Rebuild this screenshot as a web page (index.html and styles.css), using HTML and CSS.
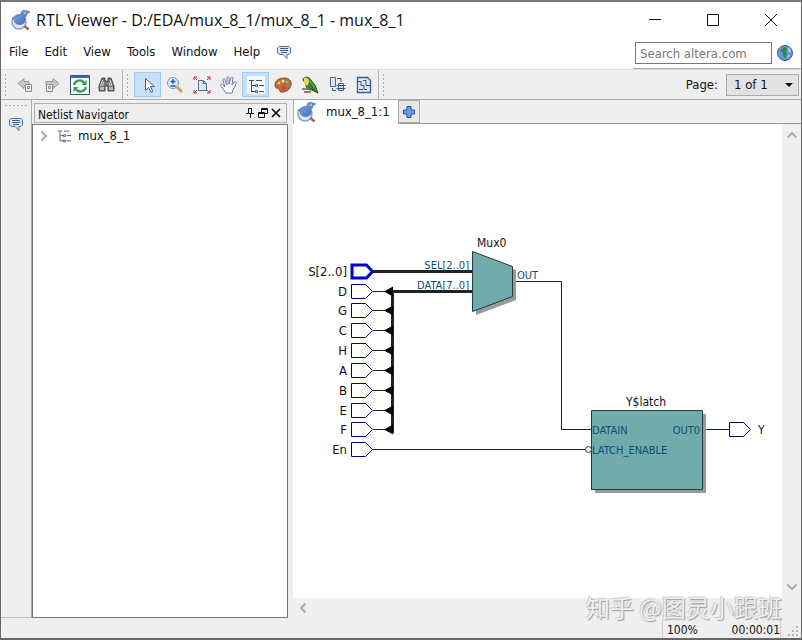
FILE: index.html
```html
<!DOCTYPE html>
<html lang="en">
<head>
<meta charset="utf-8">
<title>RTL Viewer</title>
<link rel="stylesheet" href="styles.css">
</head>
<body>
<svg class="defs" aria-hidden="true">
  <defs>
    <linearGradient id="blue" x1="0" y1="0" x2="1" y2="1"><stop offset="0" stop-color="#8db4ea"/><stop offset="1" stop-color="#3c62b0"/></linearGradient>
    <symbol id="app" viewBox="0 0 22 22">
      <circle cx="9" cy="13" r="7" fill="#dce9f8" stroke="#8fa3c0" stroke-width="1.6"/>
      <path d="M14.500 17l4 3.500" stroke="#a0703a" stroke-width="2.6"/>
      <path d="M2 9l4-1c0-2 3-3 5-2-1-4 3-6 6-4l3 1-3 1.500c0 2-1 3-2 4 1 5-2 7-5 7-4 0-6-2-6-5z" fill="url(#blue)" stroke="#4668ac" stroke-width=".6"/>
      <circle cx="15" cy="4" r=".8" fill="#fff"/>
    </symbol>
    <symbol id="note" viewBox="0 0 16 16">
      <path d="M3 2.500h10l1.500 1.500v5L13 10.500h-2v4l-4-4H4L1.500 9V4z" fill="#dce8fa" stroke="#52719f"/>
      <path d="M4 4.500h8M4 6.500h8M5 8.500h6" stroke="#3f5d96"/>
    </symbol>
    <symbol id="tree" viewBox="0 0 18 18">
      <path d="M2 3.500h5M4.500 4v11M5 8.500h4M5 14.500h4" fill="none" stroke="#445066"/>
      <path d="M9 3.500h6M12 8.500h5M12 14.500h5" stroke="#445066"/>
      <path d="M8.500 7.500h2v2h-2zM8.500 13.500h2v2h-2z" fill="#d4e4fa" stroke="#4a6285"/>
    </symbol>
    <symbol id="port" viewBox="0 0 24 16" overflow="visible"><path d="M.5.500h14l7 7-7 7h-14z" fill="#fff" stroke="#00007c"/></symbol>
  </defs>
</svg>

<div class="window">
  <header class="titlebar">
    <svg class="app-icon"><use href="#app"/></svg>
    <h1>RTL Viewer - D:/EDA/mux_8_1/mux_8_1 - mux_8_1</h1>
    <div class="caption">
      <button aria-label="Minimize"><svg viewBox="0 0 14 14"><path d="M1 6.500h12"/></svg></button>
      <button aria-label="Maximize"><svg viewBox="0 0 14 14"><path d="M1.500 1.500h11v11h-11z"/></svg></button>
      <button aria-label="Close"><svg viewBox="0 0 14 14"><path d="M1 1l12 12M13 1L1 13"/></svg></button>
    </div>
  </header>

  <div class="menubar">
    <nav>
      <button>File</button><button>Edit</button><button>View</button><button>Tools</button><button>Window</button><button>Help</button>
      <button aria-label="Feedback"><svg class="i16"><use href="#note"/></svg></button>
    </nav>
    <form class="search">
      <input type="text" placeholder="Search altera.com" aria-label="Search altera.com">
      <button type="button" aria-label="Go"><svg class="i16" viewBox="0 0 16 16"><circle cx="8" cy="8" r="7.500" fill="#6c95d4" stroke="#3c5c94"/><path d="M3 6l4-4 3 1-1 3 1 3-2 5-2-3 0-3z" fill="#2b8a4c"/><path d="M11 2l3 3-1 3-2-2zM11 10l2 0-2 3z" fill="#a9cdea"/></svg></button>
    </form>
  </div>

  <div class="toolbar">
    <div class="group">
      <i class="grip"></i>
      <button aria-label="Back"><svg viewBox="0 0 20 20"><path d="M2 8.500l6-5v3h5v4H8v3z" fill="#c9c9c9" stroke="#999"/><path d="M9.500 9.500h6v7h-6zM11.500 11.500h2v2h-2z" fill="#eee" stroke="#8c8c8c"/></svg></button>
      <button aria-label="Forward"><svg viewBox="0 0 20 20"><path d="M16 8.500l-6-5v3H3v4h7v3z" fill="#c9c9c9" stroke="#999"/><path d="M3.500 9.500h6v7h-6zM5.500 11.500h2v2h-2z" fill="#eee" stroke="#8c8c8c"/></svg></button>
      <button aria-label="Refresh"><svg viewBox="0 0 20 20"><path d="M.5.500h19v19H.5z" fill="#f5faf5" stroke="#335082"/><path d="M1 1h18v2H1z" fill="#416cb4"/><path d="M4 10c1-5 8-6 10-2M16 12c-1 5-8 6-10 2" fill="none" stroke="#3ca05a" stroke-width="2.400"/><path d="M16.500 5v5h-5zM3.500 17v-5h5z" fill="#3ca05a"/></svg></button>
      <button aria-label="Find"><svg viewBox="0 0 20 20"><path d="M5 3h3v3h3V3h3l3 8v5h-6v-5H8v5H2v-5z" fill="#777" stroke="#333" stroke-width=".8"/><path d="M5.500 5l-2 6M13 5l2 6M6.500 7l-1 4M12 8l1 3" stroke="#ddd"/><path d="M3 12h4v3H3zM12 12h4v3h-4z" fill="#bbb"/></svg></button>
    </div>
    <div class="group tools">
      <i class="grip"></i>
      <button class="on" aria-label="Select"><svg viewBox="0 0 20 20"><path d="M7.500 3.500v12l3-3 2.500 5 2-1-2.500-5h4z" fill="#fff" stroke="#4c6184"/></svg></button>
      <button aria-label="Zoom"><svg viewBox="0 0 20 20"><path d="M12 12l5 5" stroke="#c9a050" stroke-width="2.600"/><circle cx="8" cy="8" r="5.500" fill="#dce9fb" stroke="#6f96d0"/><path d="M8 4v5M5.500 6.500h5M5.500 11h5" stroke="#2e52a4" stroke-width="1.300"/></svg></button>
      <button aria-label="Fit in window"><svg viewBox="0 0 20 20"><path d="M6.500 5.500h5l3 3v7h-8z" fill="#dce8fa" stroke="#50688f"/><path d="M11.500 5.500v3h3" fill="none" stroke="#50688f"/><path d="M2 5V2h3M2 2l3 3M15 2h3v3M18 2l-3 3M2 15v3h3M2 18l3-3M18 15v3h-3M18 18l-3-3" fill="none" stroke="#b8323a"/></svg></button>
      <button aria-label="Hand"><svg viewBox="0 0 20 20"><path d="M7 18l-5-7c-1-2 1-3 2-1l2 2-2-7c0-2 2-2 2 0l2 5V3c0-2 2-2 2 0v6l2-6c0-1 2-1 2 0l-1 7 2-3c1-1 3 0 2 2l-3 6-1 3z" fill="#fff" stroke="#647da8"/></svg></button>
      <button class="on" aria-label="Netlist Navigator"><svg viewBox="0 0 20 20"><path d="M1 1h18v18H1z" fill="#f6fafe"/><use href="#tree" x="1" y="2" width="18" height="18"/></svg></button>
      <button aria-label="Color settings"><svg viewBox="0 0 20 20"><path d="M2 10c0-5 5-7 9-7 5 0 8 3 7 7s-4 7-9 7c-3 0-2-2-3-3s-4 0-4-4z" fill="#bd6b38" stroke="#8b4525"/><circle cx="6" cy="8" r="1.500" fill="#f1d34c"/><circle cx="10" cy="6" r="1.500" fill="#e9e9e9"/><circle cx="14" cy="7" r="1.500" fill="#7ecb62"/><circle cx="15" cy="11" r="1.500" fill="#4b86dd"/><circle cx="11" cy="13" r="1.700" fill="#d93b3b"/></svg></button>
      <button aria-label="Bird's eye view"><svg viewBox="0 0 20 20"><path d="M3 5c0-3 5-4 7-1l5 6 3 8-6-3c-5 0-6-3-6-6z" fill="#46a033" stroke="#24511b"/><path d="M4 3c3-1 5 1 5 4l-2 4-3-4z" fill="#efd84a"/><path d="M9 8l6 8M8 11l5 4" stroke="#1b4f21"/><path d="M2 14h6M4 17h7" stroke="#8a5230" stroke-width="1.500"/></svg></button>
      <button aria-label="Swap"><svg viewBox="0 0 20 20"><path d="M3.500 2.500h5v9h-5zM11.500 8.500h5v7h-5z" fill="#dce8fa" stroke="#496798"/><path d="M10 3.500h4V7M9 15.500H5.500V13M9.500 10.500h9M9.500 13.500h9" fill="none" stroke="#2e4f91"/></svg></button>
      <button aria-label="Schematic page"><svg viewBox="0 0 20 20"><path d="M3.500 2.500h10l3 3v12h-13z" fill="#dce8fa" stroke="#3c5c8c" stroke-width="1.300"/><path d="M4 6.500h3v4h3v4h3M9 5.500h3v5h4M5 14.500h4" fill="none" stroke="#314f82"/></svg></button>
    </div>
    <i class="grip last"></i>
    <label for="page">Page:</label>
    <div class="select"><select id="page"><option>1 of 1</option></select></div>
  </div>

  <main>
    <aside class="dock"><i></i><button aria-label="Messages"><svg class="i16"><use href="#note"/></svg></button></aside>
    <section class="navigator">
      <div class="panel-head">
        <h2>Netlist Navigator</h2>
        <button aria-label="Pin"><svg viewBox="0 0 12 12"><path d="M4 1.500h4M4.500 1v6M7.500 1v6M2 6.500h8M6.500 7v4"/></svg></button>
        <button aria-label="Float"><svg viewBox="0 0 12 12"><path d="M4.500 5V1.500h6v5H8M1.500 5.500h6v5h-6zM1 6.500h7M4 2.500h7"/></svg></button>
        <button aria-label="Close panel"><svg viewBox="0 0 12 12"><path d="M2 2l8 8M10 2l-8 8" stroke-width="1.700"/></svg></button>
      </div>
      <div class="tree">
        <div class="node"><svg class="arrow" viewBox="0 0 8 12"><path d="M1.500 1.500L6 6l-4.500 4.500"/></svg><svg class="tree-icon"><use href="#tree"/></svg><span>mux_8_1</span></div>
      </div>
    </section>
    <section class="view">
      <div class="tabs">
        <button class="tab"><svg class="app-icon"><use href="#app"/></svg><span>mux_8_1:1</span></button>
        <button class="add" aria-label="New tab"><svg viewBox="0 0 14 14"><path d="M5 1.500h4V5h3.500v4H9v3.500H5V9H1.500V5H5z" fill="#6c9ae8" stroke="#2d4f9b"/></svg></button>
      </div>
      <div class="canvas">
        <svg class="schematic" viewBox="293 124 488 474" role="img" aria-label="Schematic of mux_8_1">
          <g class="wire">
            <path d="M514 281.500h47.500v148H591M373 449.500h212"/>
            <path class="navy" d="M704 429.500h25"/>
            <path d="M373 291.500h12M373 310.500h12M373 330.500h12M373 350.500h12M373 370.500h12M373 390.500h12M373 410.500h12M373 429.500h12"/>
          </g>
          <path class="bus" d="M373 271.500h99M392.500 433V291.500H472"/>
          <path class="arrows" d="M384 291.500l9-5v10zM384 310.500l9-5v10zM384 330.500l9-5v10zM384 350.500l9-5v10zM384 370.500l9-5v10zM384 390.500l9-5v10zM384 410.500l9-5v10zM384 429.500l9-5v10z"/>
          <path d="M352 265h14.500l6 6.500-6 6.500H352z" fill="#fff" stroke="#0000d0" stroke-width="3"/>
          <g>
            <use href="#port" x="351" y="284" width="24" height="16"/><use href="#port" x="351" y="303" width="24" height="16"/>
            <use href="#port" x="351" y="323" width="24" height="16"/><use href="#port" x="351" y="343" width="24" height="16"/>
            <use href="#port" x="351" y="363" width="24" height="16"/><use href="#port" x="351" y="383" width="24" height="16"/>
            <use href="#port" x="351" y="403" width="24" height="16"/><use href="#port" x="351" y="422" width="24" height="16"/>
            <use href="#port" x="351" y="442" width="24" height="16"/><use href="#port" x="729" y="422" width="24" height="16"/>
          </g>
          <path class="shade" d="M476 255l40 15v30l-40 15zM595 414h111v79H595z"/>
          <path class="block" d="M472.500 251.500l40 15v30l-40 15zM591.500 410.500h111v79h-111z"/>
          <circle cx="588.500" cy="449.500" r="3" fill="#fff" stroke="#004c68"/>
          <g class="name end">
            <text x="347" y="276">S[2..0]</text><text x="347" y="296">D</text><text x="347" y="315">G</text><text x="347" y="335">C</text><text x="347" y="355">H</text><text x="347" y="375">A</text><text x="347" y="395">B</text><text x="347" y="415">E</text><text x="347" y="434">F</text><text x="347" y="454">En</text>
          </g>
          <g class="name"><text x="477" y="247">Mux0</text><text x="626" y="406">Y$latch</text><text x="758" y="434">Y</text></g>
          <g class="pin"><text x="517" y="279">OUT</text><text x="592" y="434">DATAIN</text><text x="592" y="454">LATCH_ENABLE</text></g>
          <g class="pin end"><text x="469" y="269">SEL[2..0]</text><text x="469" y="289">DATA[7..0]</text><text x="700" y="434">OUT0</text></g>
        </svg>
      </div>
      <div class="vbar"><svg viewBox="0 0 12 8"><path d="M1.500 6.500L6 2l4.500 4.500"/></svg><svg viewBox="0 0 12 8"><path d="M1.500 1.500L6 6l4.500-4.500"/></svg></div>
      <div class="hbar"><svg viewBox="0 0 8 12"><path d="M6.500 1.500L2 6l4.500 4.500"/></svg></div>
    </section>
  </main>

  <footer>
    <span class="zoom">100%</span><span class="time">00:00:01</span>
    <svg class="size-grip" viewBox="0 0 12 12"><path d="M9 1h2v2H9zM5 5h2v2H5zM9 5h2v2H9zM1 9h2v2H1zM5 9h2v2H5zM9 9h2v2H9z" fill="#b4b4b4"/></svg>
  </footer>
  <div class="watermark">知乎 @图灵小跟班</div>
</div>
</body>
</html>
```
FILE: styles.css
```css
* { box-sizing: border-box; }
body { margin: 0; background: #efefef; color: #111; font: 13px/16px "DejaVu Sans Condensed", "DejaVu Sans", "Noto Sans", sans-serif; }
button { border: 0; padding: 0; background: none; color: inherit; font: inherit; display: flex; align-items: center; justify-content: center; }
svg { display: block; flex: none; }
h1, h2 { margin: 0; font-weight: 400; }
.defs { position: absolute; width: 0; height: 0; }
.i16 { width: 16px; height: 16px; }
.window { position: relative; display: flex; flex-direction: column; height: 100vh; border: 1px solid #666; border-top: 2px solid #777; border-bottom-width: 2px; }

.titlebar { display: flex; align-items: center; height: 36px; padding-left: 9px; background: #fff; }
.app-icon { width: 22px; height: 22px; }
.titlebar h1 { margin-left: 4px; font: 16px/24px "Open Sans", "Noto Sans", sans-serif; }
.caption { display: flex; margin-left: auto; padding-right: 1px; }
.caption button { width: 58px; height: 32px; }
.caption svg { width: 14px; height: 14px; fill: none; stroke: #111; }

.menubar { display: flex; height: 32px; padding-left: 8px; background: #fff; border-bottom: 1px solid #ddd; }
.menubar nav { display: flex; align-items: center; gap: 16px; height: 28px; }
.search { display: flex; align-items: center; gap: 5px; margin-left: auto; padding: 0 8px 0 2px; border-bottom: 1px solid #aaa; }
.search input { width: 137px; height: 22px; padding: 0 4px; border: 1px solid #777; background: #fff; font: inherit; color: #111; }
.search input::placeholder { color: #777; opacity: 1; }

.toolbar { display: flex; align-items: center; height: 30px; flex: none; background: #efefef; border-bottom: 1px solid #aaa; }
.group { display: flex; align-items: center; height: 29px; padding: 0 2px 0 3px; border-right: 1px solid #b4b4b4; }
.group.tools { padding: 0 1px 0 3px; }
.group button { width: 27px; height: 25px; }
.group svg { width: 20px; height: 20px; }
.group .on { background: #c5e0f7; border: 1px solid #9ccaf0; }
.grip { width: 3px; height: 24px; margin-right: 5px; background: radial-gradient(circle, #aaa 1px, transparent 1px) 0 0 / 3px 4px; }
.grip.last { margin-left: 3px; }
.toolbar label { margin-left: auto; margin-right: 8px; }
.select { position: relative; width: 73px; margin-right: 2px; }
.select select { appearance: none; width: 100%; height: 22px; padding: 0 7px; border: 1px solid #aaa; border-radius: 0; background: #e2e2e2; color: #111; font: inherit; }
.select::after { content: ""; position: absolute; right: 6px; top: 9px; border: 4px solid transparent; border-top-color: #111; pointer-events: none; }

main { display: flex; flex: 1; min-height: 0; }
.dock { width: 31px; padding: 4px 3px; border-right: 1px solid #aaa; border-bottom: 1px solid #bbb; }
.dock i { display: block; height: 3px; background: radial-gradient(circle, #aaa 1px, transparent 1px) 0 0 / 4px 3px; }
.dock button { width: 24px; margin-top: 9px; }
.navigator { display: flex; flex-direction: column; width: 256px; }
.panel-head { display: flex; align-items: center; gap: 1px; height: 20px; margin: 3px 1px 1px 2px; padding: 0 4px 0 3px; border: 1px solid #b0b0b0; }
.panel-head h2 { flex: 1; padding-top: 4px; font-size: 12px; line-height: 16px; }
.panel-head button svg { width: 12px; height: 12px; fill: none; stroke: #111; }
.tree { flex: 1; padding: 3px 7px; background: #fff; border: 1px solid #777; }
.node { display: flex; align-items: center; height: 16px; }
.arrow, .vbar svg, .hbar svg { width: 8px; height: 12px; fill: none; stroke: #aaa; stroke-width: 2; }
.tree-icon { width: 16px; height: 16px; margin: 0 6px 0 8px; }

.view { display: grid; grid-template: 24px 1fr 20px / 1fr 19px; flex: 1; min-width: 0; margin-left: 5px; }
.tabs { grid-column: 1 / 3; display: flex; border-bottom: 1px solid #999; }
.tab { justify-content: flex-start; gap: 8px; width: 106px; height: 24px; padding-left: 2px; background: #fff; border: 1px solid #aaa; border-width: 0 1px; }
.add { width: 21px; border: 1px solid #aaa; border-left: 0; background: #e6e6e6; }
.add svg { width: 14px; height: 14px; }
.canvas { overflow: hidden; background: #fff; }
.schematic { width: 488px; height: 474px; }
.vbar { display: flex; flex-direction: column; align-items: center; justify-content: space-between; padding: 7px 0; }
.vbar svg { width: 12px; height: 8px; }
.hbar { display: flex; align-items: center; padding-left: 6px; }
.wire { fill: none; stroke: #222; }
.wire .navy { stroke: #00284c; }
.bus { fill: none; stroke: #222; stroke-width: 3; }
.arrows { fill: #000; }
.shade { fill: #999; }
.block { fill: #72abac; stroke: #203c3c; }
.name { fill: #111; font-size: 12px; }
.name.end { font-size: 13px; }
.pin { fill: #0b4f70; font-size: 11px; }
.end { text-anchor: end; }

footer { display: flex; align-items: flex-end; justify-content: flex-end; height: 20px; flex: none; }
footer span { height: 19px; padding-top: 2px; font-size: 12px; line-height: 18px; border-left: 1px solid #ccc; }
.zoom { width: 61px; padding-left: 4px; }
footer .time { width: 58px; border-left: 0; border-right: 1px solid #ccc; text-align: right; }
.size-grip { width: 12px; height: 12px; margin: 0 2px 1px 6px; }
.watermark { position: absolute; right: 19px; bottom: 17px; color: #eee; font: 24px/28px "Noto Sans CJK SC", sans-serif; text-shadow: 1px 1px 1px #999, -1px -1px 1px #ccc; }
```
